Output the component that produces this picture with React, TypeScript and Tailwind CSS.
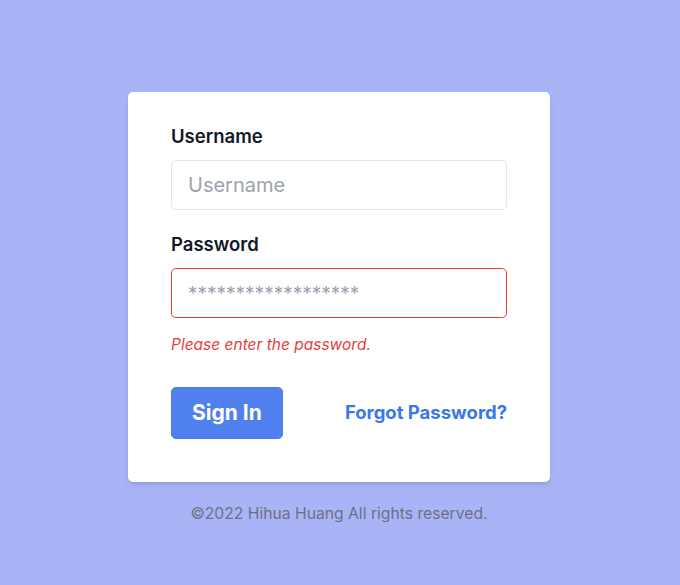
import React, { useState } from 'react';

const App: React.FC = () => {
  const [username, setUsername] = useState('');
  const [password, setPassword] = useState('');

  return (
    <div
      className="min-h-[585px] w-full bg-[#a9b4f7] pt-[92px] pr-[2px]"
      style={{ fontFamily: 'Inter, "Noto Sans", sans-serif' }}
    >
      <div className="mx-auto w-[422px]">
        {/* Card */}
        <form className="mb-[21px] rounded-[5px] bg-white px-[43px] pt-[31px] pb-[43px] shadow-md">
          <div className="mb-[21px]">
            <label className="mb-[10px] block text-[18.5px] font-semibold leading-[27px] text-[#111827]" htmlFor="username">
              Username
            </label>
            <input
              id="username"
              type="text"
              placeholder="Username"
              value={username}
              onChange={(e) => setUsername(e.target.value)}
              className="h-[50px] w-full appearance-none rounded-[5px] border border-[#e2e8f0] px-[16px] text-[20px] text-gray-700 placeholder-[#9ca3af] outline-none"
            />
          </div>

          <div className="mb-[32px]">
            <label className="mb-[10px] block text-[18.5px] font-semibold leading-[27px] text-[#111827]" htmlFor="password">
              Password
            </label>
            <input
              id="password"
              type="password"
              placeholder="******************"
              value={password}
              onChange={(e) => setPassword(e.target.value)}
              className="mb-[16px] h-[50px] w-full appearance-none rounded-[5px] border border-[#e53e3e] px-[16px] text-[19px] text-gray-700 placeholder-[#9ca3af] outline-none"
            />
            <p className="text-[15.5px] italic leading-[21px] text-[#e53e3e]">Please enter the password.</p>
          </div>

          <div className="flex items-center justify-between">
            <button
              type="button"
              className="h-[52px] rounded-[5px] border border-[#4a7be8] bg-[#4f80ee] px-[20px] text-[21px] font-bold text-white"
            >
              Sign In
            </button>
            <a href="#" className="text-[18.5px] font-bold text-[#3b78e7]">
              Forgot Password?
            </a>
          </div>
        </form>

        {/* Footer */}
        <p className="text-center text-[15.7px] leading-[21px] text-[#6b7080]">
          ©2022 Hihua Huang All rights reserved.
        </p>
      </div>
    </div>
  );
};

export default App;
